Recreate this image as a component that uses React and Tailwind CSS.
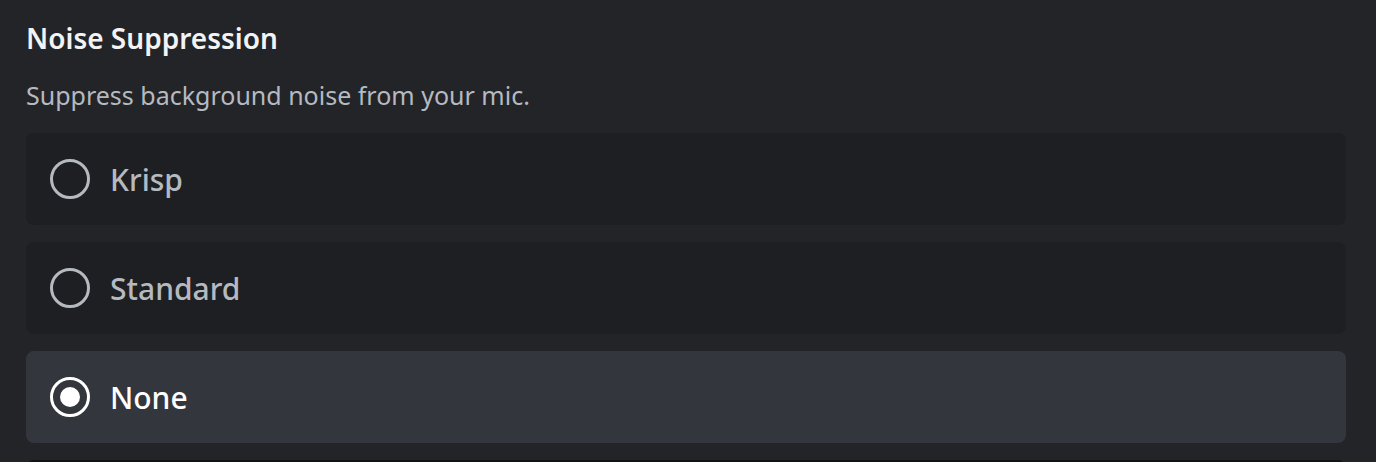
import React, { useState } from "react";

const options = ["Krisp", "Standard", "None"];

const Radio = ({ checked }) => (
  <div
    className={`w-[40px] h-[40px] shrink-0 rounded-full border-[3px] flex items-center justify-center ${
      checked ? "border-white" : "border-[#b5bac1]"
    }`}
  >
    {checked && <div className="w-[20px] h-[20px] rounded-full bg-white" />}
  </div>
);

const App = () => {
  const [selected, setSelected] = useState("None");

  return (
    <div
      className="w-[1376px] h-[462px] overflow-hidden bg-[#232428] pl-[26px] pr-[30px] pt-[18px]"
      style={{ fontFamily: '"Noto Sans", "Open Sans", sans-serif' }}
    >
      {/* Header */}
      <h2 className="text-[28px] leading-[40px] font-semibold text-[#f2f3f5]">Noise Suppression</h2>
      <p className="mt-[19px] text-[25px] leading-[36px] text-[#b5bac1]">
        Suppress background noise from your mic.
      </p>

      {/* Options */}
      <div className="mt-[20px] flex flex-col gap-[17px]">
        {options.map((opt) => {
          const checked = selected === opt;
          return (
            <button
              key={opt}
              onClick={() => setSelected(opt)}
              className={`h-[92px] w-full rounded-[8px] flex items-center gap-[20px] px-[24px] text-left ${
                checked ? "bg-[#34363d]" : "bg-[#1e1f22]"
              }`}
            >
              <Radio checked={checked} />
              <span
                className={`text-[30px] font-medium ${checked ? "text-white" : "text-[#b5bac1]"}`}
              >
                {opt}
              </span>
            </button>
          );
        })}
        <div className="h-[92px] w-full rounded-[8px] bg-[#111214]" />
      </div>
    </div>
  );
};

export default App;
